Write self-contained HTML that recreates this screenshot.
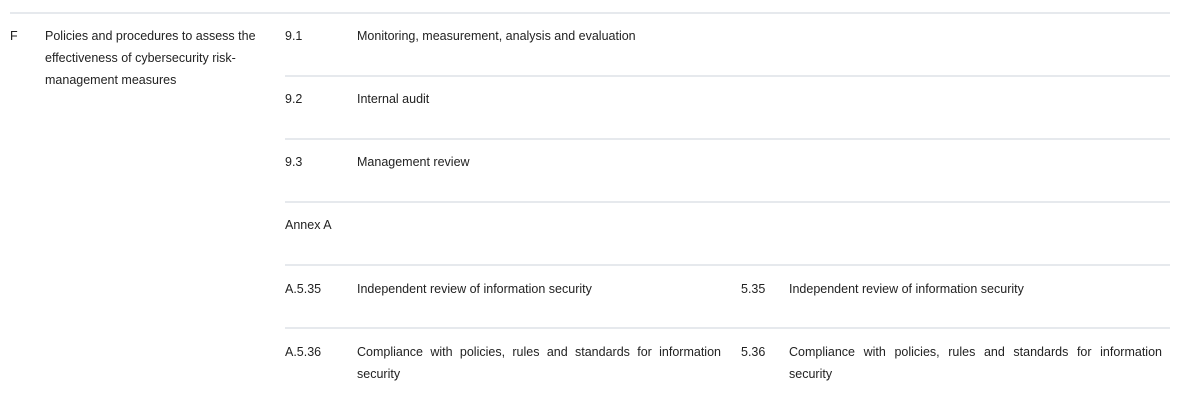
<!DOCTYPE html><html><head><style>
body{margin:0;width:1191px;height:411px;background:#fff;font-family:"Liberation Sans",sans-serif;font-size:12.5px;color:#222;position:relative;overflow:hidden}
.l{position:absolute;height:2px;background:#e6e9ed}
.t{position:absolute;line-height:22px;white-space:nowrap}
.j{position:absolute;line-height:22px;text-align:justify;text-align-last:left}
</style></head><body>
<div class="l" style="left:10px;width:1160px;top:12px"></div>
<div class="l" style="left:285px;width:885px;top:75px"></div>
<div class="l" style="left:285px;width:885px;top:138px"></div>
<div class="l" style="left:285px;width:885px;top:201px"></div>
<div class="l" style="left:285px;width:885px;top:264px"></div>
<div class="l" style="left:285px;width:885px;top:327px"></div>
<div class="t" style="left:10px;top:25px">F</div>
<div class="t" style="left:45px;top:25px;white-space:normal;width:225px">Policies and procedures to assess the<br>effectiveness of cybersecurity risk-<br>management measures</div>
<div class="t" style="left:285px;top:25px">9.1</div><div class="t" style="left:357px;top:25px">Monitoring, measurement, analysis and evaluation</div>
<div class="t" style="left:285px;top:88px">9.2</div><div class="t" style="left:357px;top:88px">Internal audit</div>
<div class="t" style="left:285px;top:151px">9.3</div><div class="t" style="left:357px;top:151px">Management review</div>
<div class="t" style="left:285px;top:214px">Annex A</div>
<div class="t" style="left:285px;top:278px">A.5.35</div><div class="t" style="left:357px;top:278px">Independent review of information security</div>
<div class="t" style="left:741px;top:278px">5.35</div><div class="t" style="left:789px;top:278px">Independent review of information security</div>
<div class="t" style="left:285px;top:341px">A.5.36</div><div class="j" style="left:357px;top:341px;width:364px">Compliance with policies, rules and standards for information security</div>
<div class="t" style="left:741px;top:341px">5.36</div><div class="j" style="left:789px;top:341px;width:373px">Compliance with policies, rules and standards for information security</div>
</body></html>
